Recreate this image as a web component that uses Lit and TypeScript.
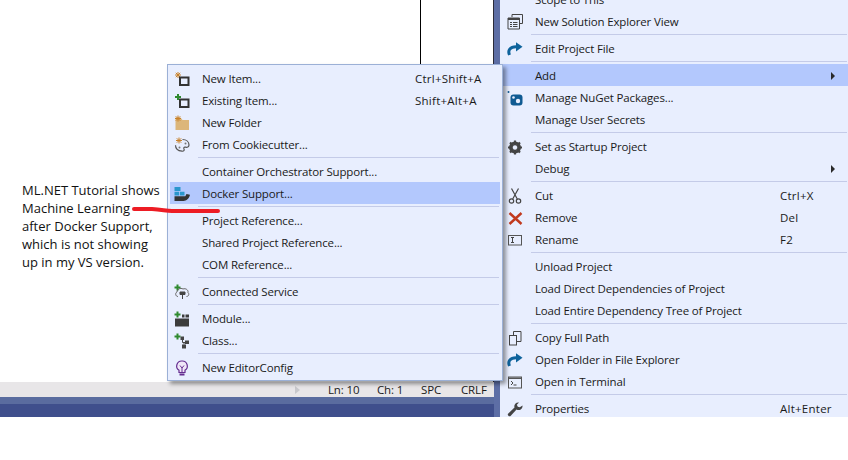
import { LitElement, html, css, svg } from "lit";
import { customElement } from "lit/decorators.js";

const plus = (x = 3.5, y = 3.5) => svg`<path d="M${x - 3} ${y}h6M${x} ${y - 3}v6" stroke="#2f8a2f" stroke-width="2" fill="none"/>`;
const star = (x = 3.5, y = 3.5) => svg`<path d="M${x - 3} ${y}h6M${x} ${y - 3}v6M${x - 2.2} ${y - 2.2}l4.4 4.4M${x + 2.2} ${y - 2.2}l-4.4 4.4" stroke="#c8812a" stroke-width="1" fill="none"/>`;
const redo = svg`<path d="M2.5 14C0.500 9.500 3 5.800 9 5.800h1.500" fill="none" stroke="#0e639c" stroke-width="3"/><path d="M9 1.200l6.500 4.600L9 10.400z" fill="#0e639c"/>`;

const icons: Record<string, unknown> = {
  newItem: svg`${star(4, 4)}<rect x="6" y="6.500" width="8.500" height="7.500" fill="none" stroke="#333" stroke-width="2"/>`,
  existing: svg`${plus(4, 4)}<rect x="6" y="6.500" width="8.500" height="7.500" fill="none" stroke="#333" stroke-width="2"/>`,
  folder: svg`<path d="M1.500 2.500h5l2 2.500H15v10H1.500z" fill="#dcb67a"/>${star(4, 3.500)}`,
  palette: svg`<path d="M8.500 2.500c4 0 6.500 2.500 6.500 5.500 0 2-1.800 2.500-3.500 2.200-1.700-.3-2 .8-1.500 1.800.7 1.300-.3 2.500-2 2.200-3.700-.4-6.500-2.700-6.500-6" fill="none" stroke="#555" stroke-width="1.200"/><circle cx="11.500" cy="6.500" r="1" fill="#777"/><circle cx="5.500" cy="10.500" r="1" fill="#777"/>${star(5, 3.500)}`,
  docker: svg`<path d="M.5 1h6v4h-6zM.5 5.800h4.500v3.600H.5zM5.800 5.800h4.700v3.600H5.800z" fill="#2a96cc"/><path d="M.5 10.300h10.800l1.200-2.300 3.500.8c-1 4-3.500 6.200-6.500 6.200H.5z" fill="#333"/>`,
  connected: svg`${plus(3.500, 3.500)}<path d="M4 12.500C1.500 12.500 .8 9 3 8c.2-3 3.500-4.500 6-3 2.500-1 5.500.8 5 3.500 1.500 1.200.8 4-1.500 4" fill="none" stroke="#666" stroke-width="1"/><path d="M6 8h5v2.500H6zM8.500 10v5" fill="#444" stroke="#444" stroke-width="1"/>`,
  module: svg`${plus(3.500, 3.500)}<path d="M1 7.500h14v8H1zM8 3.500h2.500V6.500H8zM11.500 3.500H15V6.500h-3.500z" fill="#3c3c3c"/>`,
  klass: svg`${plus(3.500, 3.500)}<path d="M6.500 3.500h3.500v3.500H6.500zM11 7.500h4v3.500h-4zM8 11.500h4v4H8z" fill="#444"/><path d="M8.500 7v2.500H11M10 9.500v2" stroke="#444" fill="none"/>`,
  bulb: svg`<path d="M8 1a5 5 0 0 1 3 9.200V12.500H5v-2.300A5 5 0 0 1 8 1z" fill="#efe6f7" stroke="#652d90" stroke-width="1.200"/><path d="M5.500 14.500h5" stroke="#652d90" stroke-width="2"/><path d="M6 5.500l2 2.500 2-2.500M8 8v4" stroke="#652d90" fill="none"/>`,
  windows: svg`<path d="M5 3V.5h10.500v9H13" fill="none" stroke="#444" stroke-width="1"/><path d="M1 4h11.500v11H1z" fill="#e8eefe" stroke="#444"/><path d="M1 4h11.500v2H1z" fill="#444"/><path d="M3 8h2v1H3zM6 8h4.500v1H6zM3 10h2v1H3zM6 10h4.500v1H6zM3 12h2v1H3zM6 12h4.500v1H6z" fill="#444"/>`,
  redo,
  nuget: svg`<rect x="3.500" y="4.500" width="12" height="11" rx="3" fill="#0f5a92"/><circle cx="1.500" cy="2" r="1" fill="#0f5a92"/><circle cx="6.500" cy="7.500" r="1.300" fill="#e8eefe"/><circle cx="11" cy="11" r="2.200" fill="#e8eefe"/>`,
  gear: svg`<circle cx="8" cy="8.500" r="4.500" fill="none" stroke="#444" stroke-width="3"/><path d="M8 1.500v14M1 8.500h14M3 3.500l10 10M13 3.500L3 13.500" stroke="#444" stroke-width="2.200"/><circle cx="8" cy="8.500" r="2.200" fill="#e8eefe"/>`,
  cut: svg`<path d="M4.500 .5l5.800 10.500M11.500 .5L5.700 11" stroke="#444" stroke-width="1.200" fill="none"/><circle cx="4.500" cy="13" r="2.200" fill="none" stroke="#444" stroke-width="1.200"/><circle cx="11.500" cy="13" r="2.200" fill="none" stroke="#444" stroke-width="1.200"/>`,
  remove: svg`<path d="M2.500 3l12 11M14.500 3L2.500 14" stroke="#c1391e" stroke-width="2.400"/>`,
  rename: svg`<rect x="1.500" y="3.500" width="13" height="9.500" fill="none" stroke="#555"/><path d="M4 5.500h3M4 10.500h3M5.500 5.500v5" stroke="#444" fill="none"/>`,
  copy: svg`<rect x="2.500" y="5.500" width="7" height="9.500" fill="none" stroke="#444"/><path d="M6.500 5V1.500H14v10h-4" fill="none" stroke="#444"/>`,
  terminal: svg`<rect x="1.500" y="3" width="13" height="11" fill="none" stroke="#555"/><path d="M2 3.500h12.500V5H2z" fill="#555"/><path d="M4 7l2 2-2 2M6.500 11h3" stroke="#444" fill="none"/>`,
  wrench: svg`<path d="M15.500 4.500a4 4 0 0 1-6 4L3.800 14.700a1.600 1.600 0 0 1-2.500-2.300l6.200-5.800A4 4 0 0 1 12 1.500L9.800 3.700l1 2 2 .5z" fill="#444"/>`,
};

type Entry = { t: string; i?: string; k?: string; sub?: boolean; on?: boolean } | null;

const addMenu: Entry[] = [
  { t: "New Item...", i: "newItem", k: "Ctrl+Shift+A" },
  { t: "Existing Item...", i: "existing", k: "Shift+Alt+A" },
  { t: "New Folder", i: "folder" },
  { t: "From Cookiecutter...", i: "palette" },
  null,
  { t: "Container Orchestrator Support..." },
  { t: "Docker Support...", i: "docker", on: true },
  null,
  { t: "Project Reference..." },
  { t: "Shared Project Reference..." },
  { t: "COM Reference..." },
  null,
  { t: "Connected Service", i: "connected" },
  null,
  { t: "Module...", i: "module" },
  { t: "Class...", i: "klass" },
  null,
  { t: "New EditorConfig", i: "bulb" },
];

const projectMenu: Entry[] = [
  { t: "Scope to This" },
  { t: "New Solution Explorer View", i: "windows" },
  null,
  { t: "Edit Project File", i: "redo" },
  null,
  { t: "Add", sub: true, on: true },
  { t: "Manage NuGet Packages...", i: "nuget" },
  { t: "Manage User Secrets" },
  null,
  { t: "Set as Startup Project", i: "gear" },
  { t: "Debug", sub: true },
  null,
  { t: "Cut", i: "cut", k: "Ctrl+X" },
  { t: "Remove", i: "remove", k: "Del" },
  { t: "Rename", i: "rename", k: "F2" },
  null,
  { t: "Unload Project" },
  { t: "Load Direct Dependencies of Project" },
  { t: "Load Entire Dependency Tree of Project" },
  null,
  { t: "Copy Full Path", i: "copy" },
  { t: "Open Folder in File Explorer", i: "redo" },
  { t: "Open in Terminal", i: "terminal" },
  null,
  { t: "Properties", i: "wrench", k: "Alt+Enter" },
];

@customElement("app-root")
export class AppRoot extends LitElement {
  static styles = css`
    :host { display: block; width: 848px; height: 460px; background: #fff; font-family: "Open Sans", "Noto Sans", sans-serif; font-size: 11.5px; letter-spacing: -0.15px; color: #1a1a1a; }
    .stage { position: relative; width: 848px; height: 417px; overflow: hidden; }
    .ide { display: flex; flex-direction: column; width: 500px; height: 417px; box-sizing: border-box; border-right: 6px solid #5d6ea5; }
    .doc { flex: 1; min-height: 0; background: #fff; border-right: 1px solid #2b2b38; }
    .pane { width: 421px; height: 64px; box-sizing: border-box; border-right: 1px solid #000; }
    .note { margin: 117px 0 0 22px; font-size: 13px; letter-spacing: 0; line-height: 18px; color: #111; white-space: nowrap; }
    .status { height: 15px; background: #e8e6e8; display: flex; align-items: center; line-height: 17px; }
    .tri { width: 0; height: 0; margin-left: 295px; border-left: 5px solid #c8c8cc; border-top: 4px solid transparent; border-bottom: 4px solid transparent; }
    .s1 { margin-left: 28px; width: 49px; }
    .s2 { width: 44px; }
    .s3 { width: 40px; }
    .band { height: 20px; background: #3f4f8c; border-top: 7px solid #5a6c9f; box-sizing: border-box; }
    .menu { position: absolute; box-sizing: border-box; background: #e8eefe; display: flex; flex-direction: column; }
    .add { left: 167px; top: 64px; width: 336px; height: 317px; padding: 2px; border: 1px solid #9bb0d6; box-shadow: 3px 3px 4px rgba(0, 0, 0, 0.4); z-index: 2; }
    .project { left: 500px; top: -12px; width: 348px; }
    .row { height: 22px; flex: none; display: grid; align-items: center; line-height: 24px; white-space: nowrap; }
    .add .row { grid-template-columns: 32px 213px 1fr; }
    .project .row { grid-template-columns: 35px 245px 1fr 17px; }
    .row.on { background: #b3c8fd; }
    .key { letter-spacing: 0.25px; }
    .ic { width: 16px; height: 16px; display: block; }
    .add .ic { margin-left: 4px; }
    .project .ic { margin-left: 7px; }
    .sep { height: 5px; flex: none; display: flex; align-items: center; }
    .sep i { display: block; flex: 1; height: 1px; background: #c4cbe8; }
    .add .sep { margin: 0 1px 0 28px; }
    .project .sep { margin: 0 1px 0 31px; }
    .arrow { width: 0; height: 0; border-left: 4px solid #2a2a2a; border-top: 4px solid transparent; border-bottom: 4px solid transparent; }
    .red { position: absolute; left: 132px; top: 205px; z-index: 3; }
    svg { overflow: visible; }
  `;

  private entry(e: Entry) {
    if (!e) return html`<div class="sep"><i></i></div>`;
    return html`<div class="row ${e.on ? "on" : ""}">
      <span>${e.i ? html`<svg class="ic" viewBox="0 0 16 16">${icons[e.i]}</svg>` : ""}</span>
      <span>${e.t}</span>
      <span class="key">${e.k ?? ""}</span>
      ${e.sub ? html`<span class="arrow"></span>` : ""}
    </div>`;
  }

  render() {
    return html`<div class="stage">
      <div class="ide">
        <div class="doc">
          <div class="pane"></div>
          <div class="note">ML.NET Tutorial shows<br />Machine Learning<br />after Docker Support,<br />which is not showing<br />up in my VS version.</div>
        </div>
        <div class="status">
          <span class="tri"></span>
          <span class="s1">Ln: 10</span><span class="s2">Ch: 1</span><span class="s3">SPC</span><span>CRLF</span>
        </div>
        <div class="band"></div>
      </div>
      <div class="menu project">${projectMenu.map((e) => this.entry(e))}</div>
      <div class="menu add">${addMenu.map((e) => this.entry(e))}</div>
      <svg class="red" width="90" height="10" viewBox="0 0 90 10"><path d="M2 4H20C30 4.500 34 6 40 6H86" stroke="#ed1c24" stroke-width="4" stroke-linecap="round" fill="none"/></svg>
    </div>`;
  }
}
